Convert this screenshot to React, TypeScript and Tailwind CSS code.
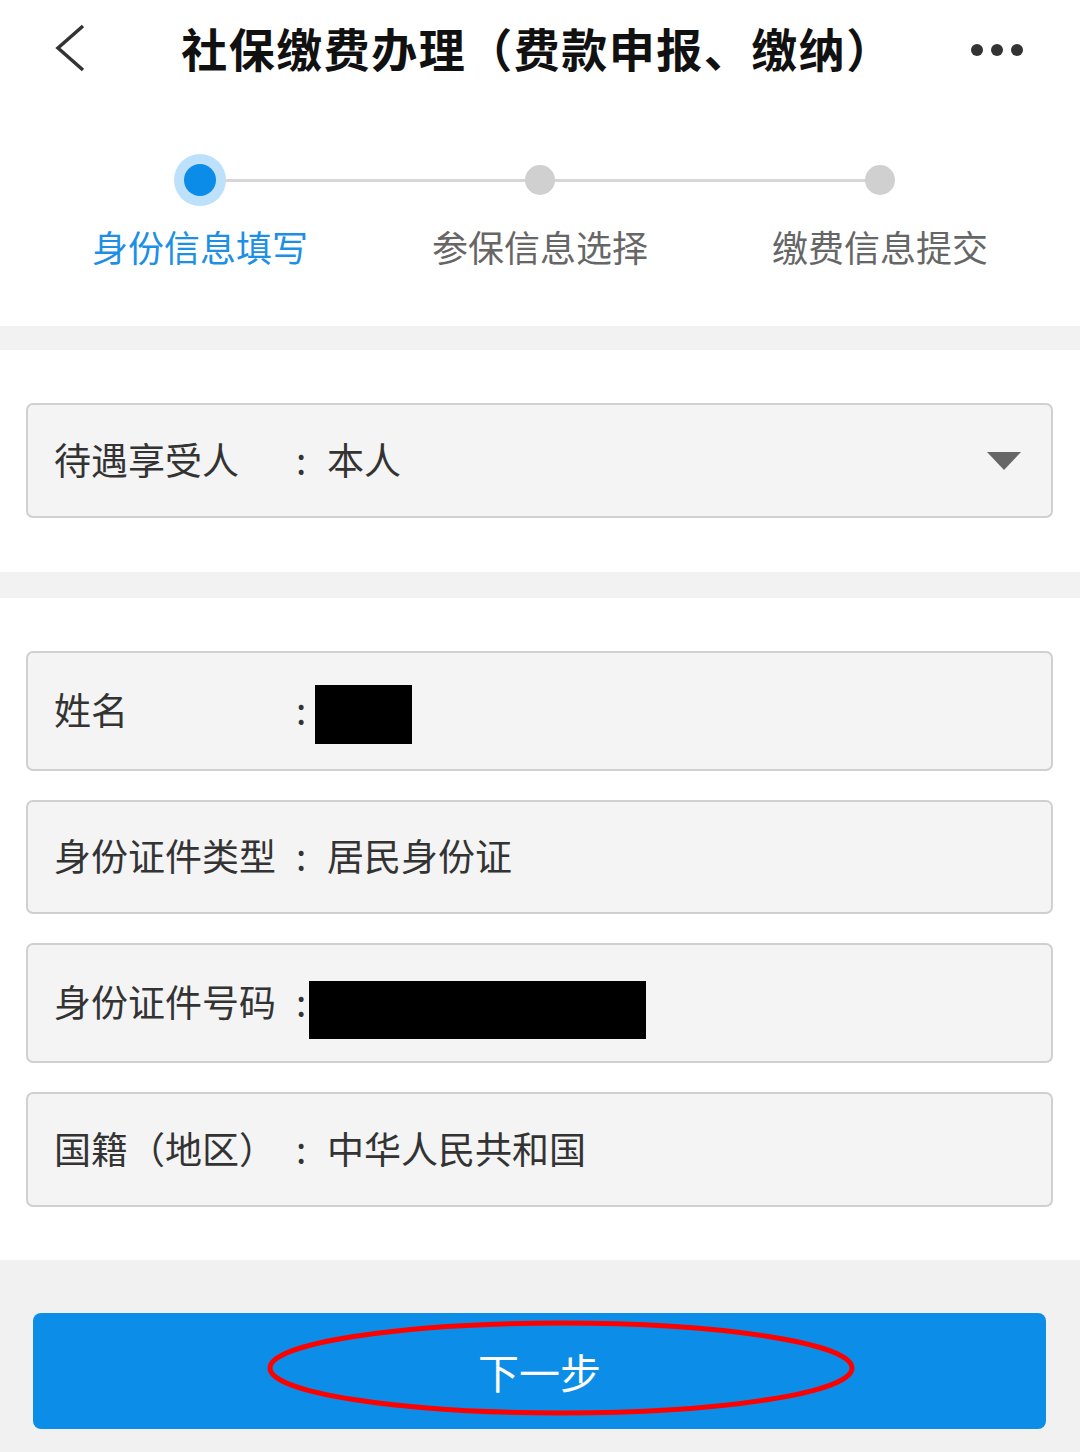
import React from "react";

const font = { fontFamily: '"Noto Sans CJK SC", "Noto Sans", sans-serif' };

function Field({
  label,
  children,
  h,
}: {
  label: string;
  children: React.ReactNode;
  h: string;
}) {
  return (
    <div
      className={`mx-[26px] mr-[27px] ${h} flex items-center rounded-[7px] border-2 border-[#d0d0d0] bg-[#f4f4f4] pl-[26px] pb-[4px] text-[37px] leading-[50px] text-[#333333]`}
    >
      <span className="w-[242px] whitespace-nowrap">{label}</span>
      <span className="w-[31px]">:</span>
      {children}
    </div>
  );
}

export default function App() {
  const steps = ["身份信息填写", "参保信息选择", "缴费信息提交"];
  return (
    <div className="w-[1080px] h-[1452px] bg-white flex flex-col" style={font}>
      {/* Header */}
      <div className="h-[100px] flex items-center px-[54px] relative">
        <svg width="32" height="48" viewBox="0 0 32 48" className="shrink-0 mt-[-4px]">
          <path d="M29 2 L4 24 L29 46" fill="none" stroke="#333" strokeWidth="3.5" strokeLinejoin="miter" />
        </svg>
        <div className="flex-1 text-center text-[46px] font-bold text-[#111] leading-none pl-[18px] tracking-[1.5px] mt-[-6px]">
          社保缴费办理（费款申报、缴纳）
        </div>
        <div className="flex gap-[8px] items-center shrink-0 mr-[3px]">
          <span className="w-[12px] h-[12px] rounded-full bg-[#333]" />
          <span className="w-[12px] h-[12px] rounded-full bg-[#333]" />
          <span className="w-[12px] h-[12px] rounded-full bg-[#333]" />
        </div>
      </div>

      {/* Stepper */}
      <div className="h-[226px] px-[30px]">
        <div className="relative mt-[54px] grid grid-cols-3 h-[52px]">
          <div className="absolute left-[170px] right-[170px] top-[25px] h-[3px] bg-[#d6d6d6]" />
          {steps.map((s, i) => (
            <div key={s} className="relative flex items-center justify-center">
              {i === 0 ? (
                <div className="w-[52px] h-[52px] rounded-full bg-[#bde0fb] flex items-center justify-center">
                  <div className="w-[32px] h-[32px] rounded-full bg-[#0c8ce9]" />
                </div>
              ) : (
                <div className="w-[30px] h-[30px] rounded-full bg-[#d0d0d0]" />
              )}
            </div>
          ))}
        </div>
        <div className="grid grid-cols-3 mt-[15px]">
          {steps.map((s, i) => (
            <div
              key={s}
              className={`text-center text-[36px] leading-[50px] ${i === 0 ? "text-[#1d8fe6]" : "text-[#666666]"}`}
            >
              {s}
            </div>
          ))}
        </div>
      </div>

      <div className="h-[24px] bg-[#f2f2f2]" />

      {/* Select */}
      <div className="py-[53px] pb-[54px]">
        <Field label="待遇享受人" h="h-[115px]">
          <span className="flex-1">本人</span>
          <svg width="36" height="20" viewBox="0 0 36 20" className="mr-[29px] mt-[4px]">
            <path d="M1 1 L35 1 L18 19 Z" fill="#666" />
          </svg>
        </Field>
      </div>

      <div className="h-[26px] bg-[#f2f2f2]" />

      {/* Info fields */}
      <div className="pt-[53px] pb-[53px] flex flex-col gap-[29px]">
        <Field label="姓名" h="h-[120px]">
          <div className="ml-[-12px] mt-[10px] w-[97px] h-[59px] bg-black" />
        </Field>
        <Field label="身份证件类型" h="h-[114px]">
          <span>居民身份证</span>
        </Field>
        <Field label="身份证件号码" h="h-[120px]">
          <div className="ml-[-18px] mt-[18px] w-[337px] h-[58px] bg-black" />
        </Field>
        <Field label="国籍（地区）" h="h-[115px]">
          <span>中华人民共和国</span>
        </Field>
      </div>

      {/* Bottom */}
      <div className="flex-1 bg-[#f1f1f1] pt-[53px]">
        <div className="relative mx-[33px] mr-[34px] h-[116px] rounded-[8px] bg-[#0c8ee8] flex items-center justify-center text-white text-[41px]">
          <span className="mt-[2px]">下一步</span>
          <svg
            className="absolute left-[233px] top-[6px]"
            width="590"
            height="100"
            viewBox="0 0 590 100"
          >
            <ellipse cx="295" cy="49" rx="291" ry="45" fill="none" stroke="#ff0000" strokeWidth="5" />
          </svg>
        </div>
      </div>
    </div>
  );
}
